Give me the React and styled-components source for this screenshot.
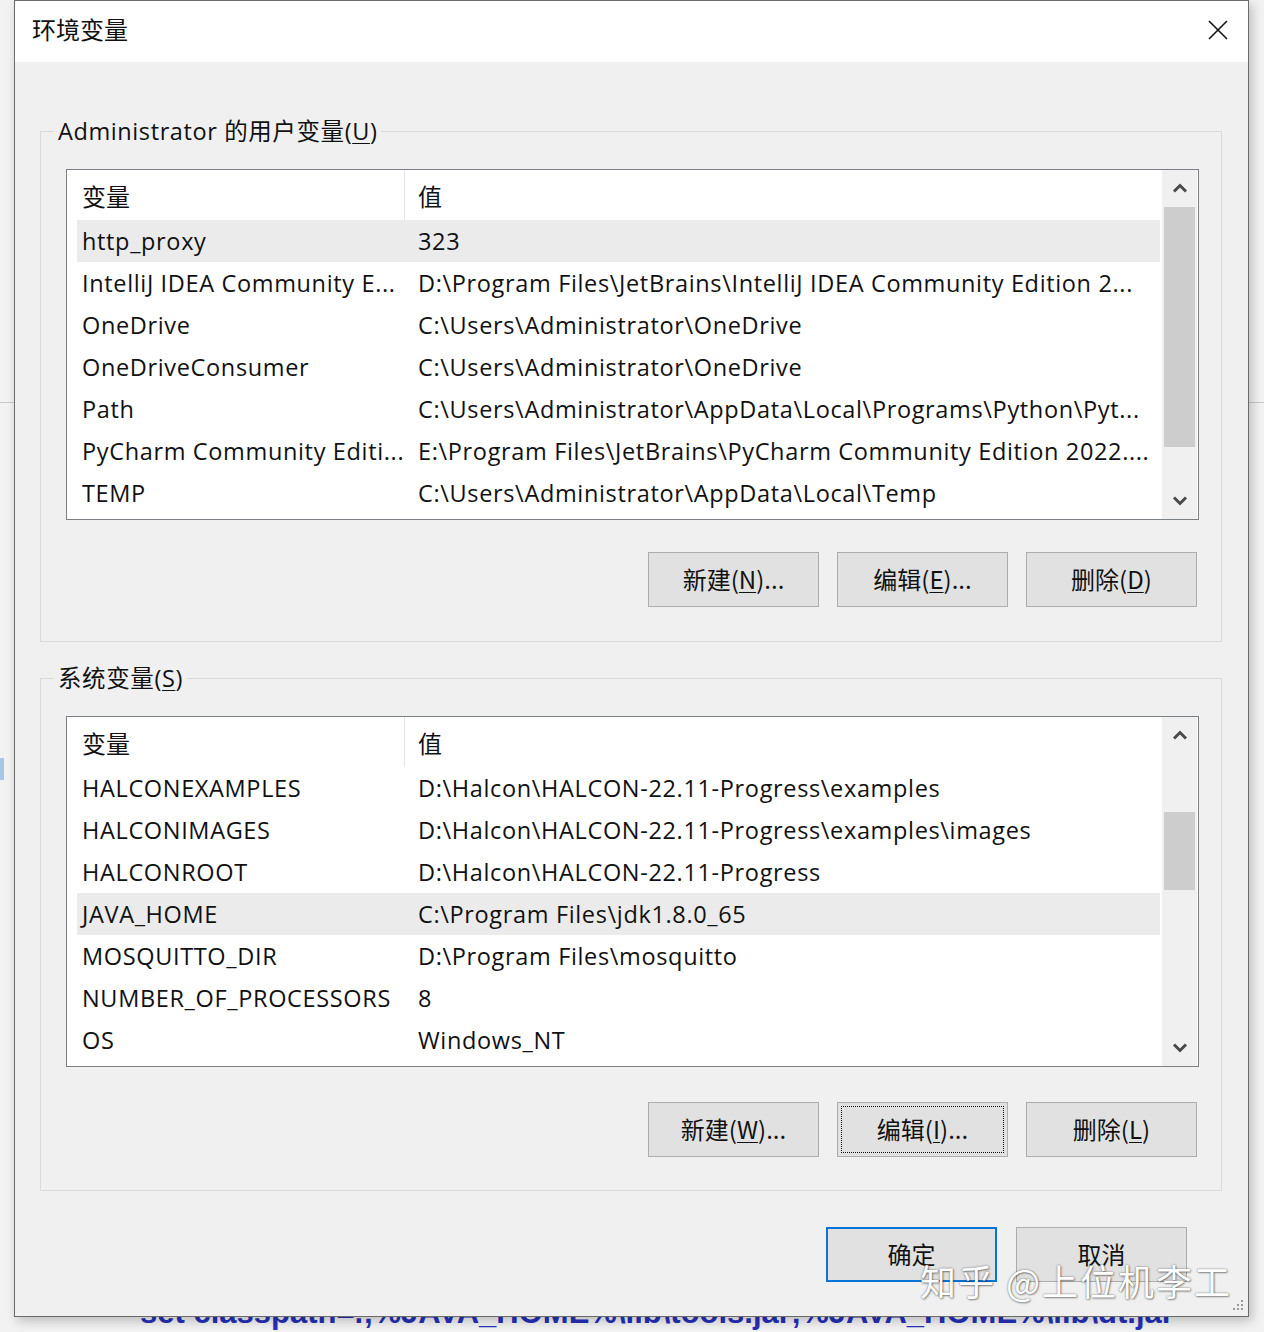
import React from "react";
import styled, { createGlobalStyle } from "styled-components";

const GlobalStyle = createGlobalStyle`
  html, body {
    margin: 0;
    padding: 0;
    background: #f0f0f0;
  }
  body {
    font-family: "Open Sans", "Noto Sans CJK SC", sans-serif;
    color: #111;
  }
`;

const userVars = [
  { name: "http_proxy", value: "323", selected: true },
  {
    name: "IntelliJ IDEA Community E...",
    value: "D:\\Program Files\\JetBrains\\IntelliJ IDEA Community Edition 2...",
  },
  { name: "OneDrive", value: "C:\\Users\\Administrator\\OneDrive" },
  { name: "OneDriveConsumer", value: "C:\\Users\\Administrator\\OneDrive" },
  {
    name: "Path",
    value: "C:\\Users\\Administrator\\AppData\\Local\\Programs\\Python\\Pyt...",
  },
  {
    name: "PyCharm Community Editi...",
    value: "E:\\Program Files\\JetBrains\\PyCharm Community Edition 2022....",
  },
  { name: "TEMP", value: "C:\\Users\\Administrator\\AppData\\Local\\Temp" },
];

const systemVars = [
  { name: "HALCONEXAMPLES", value: "D:\\Halcon\\HALCON-22.11-Progress\\examples" },
  {
    name: "HALCONIMAGES",
    value: "D:\\Halcon\\HALCON-22.11-Progress\\examples\\images",
  },
  { name: "HALCONROOT", value: "D:\\Halcon\\HALCON-22.11-Progress" },
  { name: "JAVA_HOME", value: "C:\\Program Files\\jdk1.8.0_65", selected: true },
  { name: "MOSQUITTO_DIR", value: "D:\\Program Files\\mosquitto" },
  { name: "NUMBER_OF_PROCESSORS", value: "8" },
  { name: "OS", value: "Windows_NT" },
];

const Chevron = ({ down }) => (
  <svg width="16" height="11" viewBox="0 0 16 11">
    <polyline
      points={down ? "2,2.5 8,8.5 14,2.5" : "2,8.5 8,2.5 14,8.5"}
      fill="none"
      stroke="#4a4a4a"
      strokeWidth="3"
    />
  </svg>
);

const CloseIcon = () => (
  <svg width="20" height="20" viewBox="0 0 20 20">
    <path d="M1 1 L19 19 M19 1 L1 19" stroke="#111" strokeWidth="1.6" />
  </svg>
);

const VarList = ({ rows, thumbTop, thumbHeight }) => (
  <ListBox>
    <ListContent>
      <HeaderRow>
        <NameCell>变量</NameCell>
        <HeaderValue>值</HeaderValue>
      </HeaderRow>
      {rows.map((r) => (
        <Row key={r.name} $selected={r.selected}>
          <NameCell>{r.name}</NameCell>
          <ValueCell>{r.value}</ValueCell>
        </Row>
      ))}
    </ListContent>
    <ScrollBar>
      <ArrowBox>
        <Chevron />
      </ArrowBox>
      <Track>
        <Thumb style={{ marginTop: thumbTop, height: thumbHeight }} />
      </Track>
      <ArrowBox>
        <Chevron down />
      </ArrowBox>
    </ScrollBar>
  </ListBox>
);

const App = () => {
  return (
    <Page>
      <GlobalStyle />
      <BackLine $side="left" />
      <BackLine $side="right" />
      <BackMark />
      <BackText>set classpath=.;%JAVA_HOME%\lib\tools.jar;%JAVA_HOME%\lib\dt.jar</BackText>

      <Dialog>
        <TitleBar>
          <Title>环境变量</Title>
          <CloseButton>
            <CloseIcon />
          </CloseButton>
        </TitleBar>

        <Body>
          <Group>
            <Legend>
              Administrator 的用户变量(<u>U</u>)
            </Legend>
            <VarList rows={userVars} thumbTop={0} thumbHeight={240} />
            <ButtonRow>
              <Button>
                新建(<u>N</u>)...
              </Button>
              <Button>
                编辑(<u>E</u>)...
              </Button>
              <Button>
                删除(<u>D</u>)
              </Button>
            </ButtonRow>
          </Group>

          <Group $second>
            <Legend>
              系统变量(<u>S</u>)
            </Legend>
            <VarList rows={systemVars} thumbTop={58} thumbHeight={78} />
            <ButtonRow $lower>
              <Button>
                新建(<u>W</u>)...
              </Button>
              <Button $focused>
                编辑(<u>I</u>)...
              </Button>
              <Button>
                删除(<u>L</u>)
              </Button>
            </ButtonRow>
          </Group>

          <Footer>
            <Button $primary>确定</Button>
            <Button>取消</Button>
          </Footer>
        </Body>
        <Grip>
          <svg width="14" height="14" viewBox="0 0 14 14">
            {[
              [11, 2],
              [11, 6],
              [7, 6],
              [11, 10],
              [7, 10],
              [3, 10],
            ].map(([x, y]) => (
              <rect key={`${x}-${y}`} x={x} y={y} width="2" height="2" fill="#9a9a9a" />
            ))}
          </svg>
        </Grip>
      </Dialog>

      <Watermark>知乎 @上位机李工</Watermark>
    </Page>
  );
};

export default App;

const Page = styled.div`
  position: relative;
  width: 1264px;
  height: 1332px;
  overflow: hidden;
  background: #f2f2f3;
`;

const BackLine = styled.div`
  position: absolute;
  top: 402px;
  ${(p) => (p.$side === "left" ? "left: 0; width: 14px;" : "right: 0; width: 15px;")}
  height: 1px;
  background: #c9c9cc;
`;

const BackMark = styled.div`
  position: absolute;
  left: 0;
  top: 758px;
  width: 4px;
  height: 22px;
  background: #a9c6e6;
`;

const BackText = styled.div`
  position: absolute;
  left: 140px;
  top: 1295px;
  font-family: "Liberation Sans", sans-serif;
  font-size: 31px;
  font-weight: bold;
  color: #2630b8;
  white-space: nowrap;
`;

const Dialog = styled.div`
  position: relative;
  z-index: 1;
  box-sizing: border-box;
  margin-left: 14px;
  width: 1235px;
  height: 1317px;
  border: 1px solid #6b6b6b;
  background: #f0f0f0;
  box-shadow: 3px 4px 10px rgba(0, 0, 0, 0.22);
  display: flex;
  flex-direction: column;
`;

const TitleBar = styled.div`
  height: 61px;
  background: #fff;
  display: flex;
  align-items: center;
  justify-content: space-between;
  padding: 0 20px 0 17px;
`;

const Title = styled.div`
  font-family: "Noto Sans CJK SC", sans-serif;
  font-size: 24px;
  color: #111;
  padding-bottom: 6px;
`;

const CloseButton = styled.div`
  display: flex;
  padding-bottom: 4px;
`;

const Body = styled.div`
  flex: 1;
  padding: 54px 26px 0 25px;
  display: flex;
  flex-direction: column;
`;

const Group = styled.fieldset`
  margin: ${(p) => (p.$second ? "21px" : "0")} 0 0 0;
  padding: 0 22px ${(p) => (p.$second ? "33px" : "34px")} 25px;
  border: 1px solid #dadada;
  min-width: 0;
`;

const Legend = styled.legend`
  margin-left: -12px;
  padding: 0 4px;
  font-size: 23.5px;
  letter-spacing: 0.6px;
  line-height: 30px;
  color: #111;

  u {
    text-underline-offset: 3px;
    text-decoration-thickness: 1px;
  }
`;

const ListBox = styled.div`
  margin-top: 23px;
  height: 351px;
  box-sizing: border-box;
  border: 1px solid #7d7f86;
  background: #fff;
  display: flex;
  padding-left: 10px;
`;

const ListContent = styled.div`
  flex: 1;
  min-width: 0;
  display: flex;
  flex-direction: column;
`;

const HeaderRow = styled.div`
  height: 50px;
  display: flex;
  align-items: center;
  font-family: "Noto Sans CJK SC", sans-serif;
  font-size: 24px;
`;

const Row = styled.div`
  height: 42px;
  display: flex;
  align-items: center;
  background: ${(p) => (p.$selected ? "#ebebeb" : "transparent")};
  font-size: 23.5px;
  letter-spacing: 0.65px;
  margin-right: 2px;
`;

const NameCell = styled.div`
  width: 327px;
  flex: none;
  padding-left: 5px;
  box-sizing: border-box;
  white-space: nowrap;
`;

const HeaderValue = styled.div`
  align-self: stretch;
  display: flex;
  align-items: center;
  padding-left: 13px;
  border-left: 1px solid #e5e5e5;
`;

const ValueCell = styled.div`
  padding-left: 14px;
  white-space: nowrap;
  overflow: hidden;
`;

const ScrollBar = styled.div`
  width: 35px;
  flex: none;
  margin-right: 1px;
  background: #f0f0f0;
  display: flex;
  flex-direction: column;
`;

const ArrowBox = styled.div`
  height: 37px;
  display: flex;
  align-items: center;
  justify-content: center;
`;

const Track = styled.div`
  flex: 1;
`;

const Thumb = styled.div`
  margin: 0 2px;
  background: #cdcdcd;
`;

const ButtonRow = styled.div`
  margin-top: ${(p) => (p.$lower ? "35px" : "32px")};
  display: flex;
  justify-content: flex-end;
  gap: 18px;
  padding-right: 2px;
`;

const Button = styled.div`
  position: relative;
  width: 171px;
  height: 55px;
  box-sizing: border-box;
  display: flex;
  align-items: center;
  justify-content: center;
  background: #e1e1e1;
  border: ${(p) => (p.$primary ? "2px solid #0a74d6" : "1px solid #adadad")};
  font-family: "Noto Sans CJK SC", sans-serif;
  font-size: 24px;
  color: #111;
  padding-bottom: 2px;

  u {
    text-underline-offset: 3px;
    text-decoration-thickness: 1px;
  }

  ${(p) =>
    p.$focused &&
    `
    &::after {
      content: "";
      position: absolute;
      inset: 3px;
      border: 1px dotted #111;
    }
  `}
`;

const Footer = styled.div`
  margin-top: 36px;
  display: flex;
  justify-content: flex-end;
  gap: 19px;
  padding-right: 35px;
`;

const Grip = styled.div`
  position: absolute;
  right: 4px;
  bottom: 4px;
  display: flex;
`;

const Watermark = styled.div`
  position: absolute;
  z-index: 2;
  left: 920px;
  top: 1254px;
  font-family: "Noto Sans CJK SC", sans-serif;
  font-size: 36px;
  letter-spacing: 2px;
  color: #fff;
  white-space: pre;
  text-shadow: 0 0 2px rgba(0, 0, 0, 0.55), 1px 1px 2px rgba(0, 0, 0, 0.35);
`;
